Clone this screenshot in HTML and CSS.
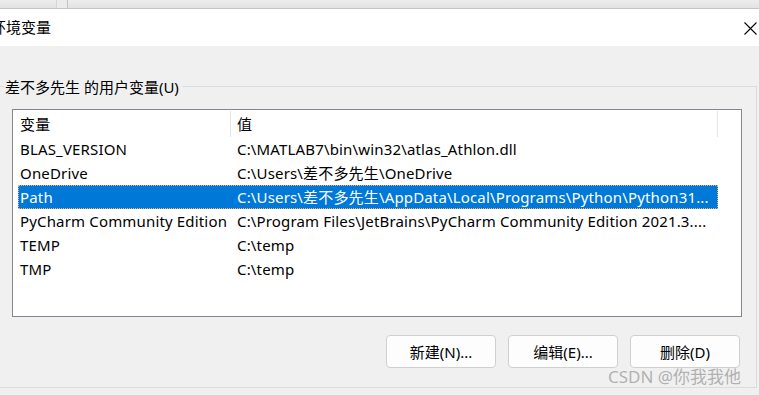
FILE: index.html
```html
<!DOCTYPE html>
<html lang="zh-CN">
<head>
<meta charset="utf-8">
<title>环境变量</title>
<link rel="stylesheet" href="styles.css">
</head>
<body>
<div class="page">
  <div class="topstrip">
    <div class="strip-a"></div>
    <div class="strip-b"></div>
    <div class="strip-c"></div>
  </div>
  <div class="titlebar">
    <span class="title">环境变量</span>
    <svg class="close" width="13" height="13" viewBox="0 0 13 13"><path d="M0.5 0.5 L12.5 12.5 M12.5 0.5 L0.5 12.5" stroke="#000" stroke-width="1.1" fill="none"/></svg>
  </div>
  <div class="content">
    <div class="group">
      <div class="legend">差不多先生 的用户变量(U)</div>
      <div class="listbox">
        <div class="hdr">
          <div class="hcell hname">变量</div>
          <div class="hcell hval">值</div>
        </div>
        <div class="row"><div class="name">BLAS_VERSION</div><div class="val">C:\MATLAB7\bin\win32\atlas_Athlon.dll</div></div>
        <div class="row"><div class="name">OneDrive</div><div class="val">C:\Users\差不多先生\OneDrive</div></div>
        <div class="row sel"><div class="name">Path</div><div class="val">C:\Users\差不多先生\AppData\Local\Programs\Python\Python31...</div></div>
        <div class="row"><div class="name">PyCharm Community Edition</div><div class="val">C:\Program Files\JetBrains\PyCharm Community Edition 2021.3....</div></div>
        <div class="row"><div class="name">TEMP</div><div class="val">C:\temp</div></div>
        <div class="row"><div class="name">TMP</div><div class="val">C:\temp</div></div>
      </div>
      <div class="buttons">
        <button class="btn">新建(N)...</button>
        <button class="btn">编辑(E)...</button>
        <button class="btn">删除(D)</button>
      </div>
    </div>
  </div>
  <div class="watermark">CSDN @你我我他</div>
</div>
</body>
</html>
```
FILE: styles.css
```css
* { box-sizing: border-box; }
html, body { margin: 0; padding: 0; }
body {
  background: #f0f0f0;
  font-family: "Noto Sans", "Noto Sans CJK SC", sans-serif;
  font-size: 15px;
  color: #000;
}
.page {
  position: relative;
  width: 759px;
  height: 395px;
  overflow: hidden;
  background: #f0f0f0;
}
.topstrip {
  height: 9px;
  display: flex;
  background: linear-gradient(#ededed, #e3e3e3);
  border-bottom: 1px solid #c4c4c4;
}
.strip-a { width: 57px; border-right: 1px solid #d6d6d6; }
.strip-b { width: 11px; border-right: 1px solid #c2c2c2; background: #ebebeb; }
.strip-c { flex: 1; }
.titlebar {
  height: 37px;
  background: #fff;
  display: flex;
  align-items: center;
  justify-content: space-between;
}
.title {
  margin-left: -9px;
  font-size: 15px;
  line-height: 20px;
  margin-top: -1px;
}
.close { margin-right: 2px; margin-top: 1px; }
.content { padding-top: 40px; }
.group {
  border: 1px solid #dcdcdc;
  border-left: none;
  margin-right: 2px;
  padding-bottom: 19px;
}
.legend {
  width: fit-content;
  margin-top: -10px;
  margin-left: 4px;
  padding: 0 3px 0 1px;
  background: #f0f0f0;
  line-height: 20px;
  height: 20px;
  white-space: nowrap;
}
.listbox {
  margin: 12px 0 0 12px;
  width: 730px;
  height: 208px;
  border: 1px solid #828790;
  background: #fff;
  overflow: hidden;
  letter-spacing: 0.16px;
}
.hdr {
  display: flex;
  height: 27px;
}
.hcell {
  line-height: 26px;
  border-right: 1px solid #e5e5e5;
  margin-top: 1px;
  height: 26px;
  white-space: nowrap;
}
.hname { width: 218px; padding-left: 7px; }
.hval { width: 487px; padding-left: 6px; }
.row {
  display: flex;
  margin-left: 5px;
  width: 700px;
  height: 24px;
  line-height: 24px;
  white-space: nowrap;
}
.name { width: 212px; padding-left: 2px; overflow: hidden; }
.val { flex: 1; padding-left: 7px; overflow: hidden; }
.row.sel {
  background: #0078d7;
  color: #fff;
  outline: 1px dotted #f3b070;
  outline-offset: -1px;
}
.buttons {
  display: flex;
  justify-content: flex-end;
  gap: 12px;
  margin-top: 18px;
  padding-right: 16px;
}
.btn {
  width: 110px;
  height: 33px;
  background: #fdfdfd;
  border: 1px solid #d0d0d0;
  border-radius: 4px;
  font-family: "Noto Sans", "Noto Sans CJK SC", sans-serif;
  font-size: 15px;
  color: #000;
  padding: 0;
}
.watermark {
  position: absolute;
  left: 608px;
  top: 365px;
  font-size: 17px;
  line-height: 24px;
  color: rgba(120, 120, 120, 0.55);
  white-space: nowrap;
}
```
